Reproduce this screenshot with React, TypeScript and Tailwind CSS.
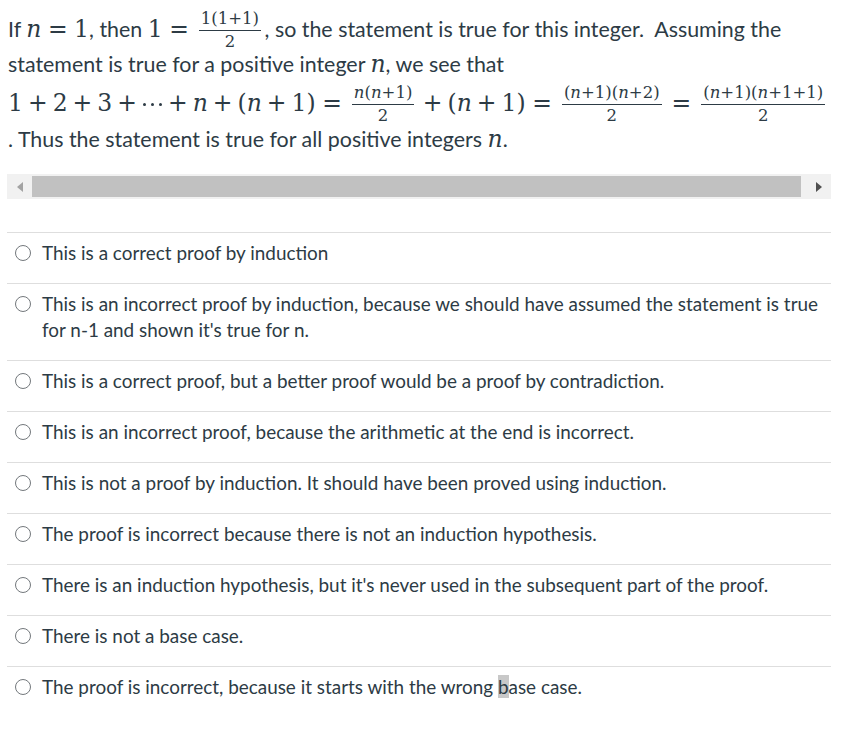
import React from 'react';

const mathFont = "font-['DejaVu_Serif',serif]";

function Bin({ children }: { children: React.ReactNode }) {
  return <span className="mx-[5px]">{children}</span>;
}

function Rel({ children }: { children: React.ReactNode }) {
  return <span className="mx-[6.5px]">{children}</span>;
}

function N() {
  return <i>n</i>;
}

function Frac({ num, den }: { num: React.ReactNode; den: React.ReactNode }) {
  return (
    <span className="inline-flex flex-col items-center align-middle mx-[3.5px] text-[16.5px] leading-[18px]">
      <span className="px-[2px] pb-[2px]">{num}</span>
      <span className="w-full border-t border-[#2d3b45] text-center pt-[2px]">{den}</span>
    </span>
  );
}

function M({ children }: { children: React.ReactNode }) {
  return <span className={`${mathFont} text-[23.5px]`}>{children}</span>;
}

// centred dots, drawn as three small circles on the math axis
function CDots() {
  return (
    <span className="inline-flex items-center gap-[5px] align-middle mx-[1px] h-[10px]">
      <span className="w-[3px] h-[3px] rounded-full bg-[#2d3b45]" />
      <span className="w-[3px] h-[3px] rounded-full bg-[#2d3b45]" />
      <span className="w-[3px] h-[3px] rounded-full bg-[#2d3b45]" />
    </span>
  );
}

const options: React.ReactNode[] = [
  'This is a correct proof by induction',
  <>
    <span className="block">This is an incorrect proof by induction, because we should have assumed the statement is true</span>
    <span className="block">for n-1 and shown it's true for n.</span>
  </>,
  'This is a correct proof, but a better proof would be a proof by contradiction.',
  'This is an incorrect proof, because the arithmetic at the end is incorrect.',
  'This is not a proof by induction. It should have been proved using induction.',
  'The proof is incorrect because there is not an induction hypothesis.',
  "There is an induction hypothesis, but it's never used in the subsequent part of the proof.",
  'There is not a base case.',
  <>
    The proof is incorrect, because it starts with the wrong <span className="bg-[#c8c8c8]">b</span>ase case.
  </>,
];

export default function App() {
  return (
    <div className="w-[850px] h-[730px] bg-white text-[#2d3b45] font-['Lato','Noto_Sans',sans-serif] overflow-hidden">
      <div className="pl-[7px] pr-[19px]">
        {/* question text */}
        <div className="overflow-hidden whitespace-nowrap text-[21.4px] pt-[12px] pl-px">
          <div className="h-[36px] flex items-center">
            <span>
              If <M><N /><Rel>=</Rel>1</M>, then <M>1<Rel>=</Rel></M>
              <M><Frac num="1(1+1)" den="2" /></M>, so the statement is true for this integer.&nbsp; Assuming the
            </span>
          </div>
          <div className="h-[33px] flex items-center">
            <span>
              statement is true for a positive integer <M><N /></M>, we see that
            </span>
          </div>
          <div className="h-[47px] flex items-center">
            <M>
              1<Bin>+</Bin>2<Bin>+</Bin>3<Bin>+</Bin><CDots /><Bin>+</Bin><N /><Bin>+</Bin>(<N /><Bin>+</Bin>1)<Rel>=</Rel>
              <Frac num={<><N />(<N />+1)</>} den="2" />
              <Bin>+</Bin>(<N /><Bin>+</Bin>1)<Rel>=</Rel>
              <Frac num={<>(<N />+1)(<N />+2)</>} den="2" />
              <Rel>=</Rel>
              <Frac num={<>(<N />+1)(<N />+1+1)</>} den="2" />
            </M>
          </div>
          <div className="h-[24px] flex items-center">
            <span>
              . Thus the statement is true for all positive integers <M><N /></M>.
            </span>
          </div>
        </div>

        {/* horizontal scrollbar */}
        <div className="mt-[22px] h-[25px] bg-[#f1f1f1] flex items-center">
          <div className="w-[25px] h-full flex items-center justify-center">
            <svg width="6" height="10" viewBox="0 0 6 10">
              <path d="M6 0 L0 5 L6 10 Z" fill="#a3a3a3" />
            </svg>
          </div>
          <div className="flex-1 h-[21px] bg-[#c1c1c1]" />
          <div className="w-[30px] h-full flex items-center justify-center pl-[5px]">
            <svg width="6" height="10" viewBox="0 0 6 10">
              <path d="M0 0 L6 5 L0 10 Z" fill="#505050" />
            </svg>
          </div>
        </div>

        {/* answers */}
        <div className="mt-[33px] text-[18.9px] leading-[26px]">
          {options.map((opt, i) => (
            <div key={i} className="border-t border-[#dedede] pt-[7px] pb-[17px] flex items-start">
              <div className="w-[35px] pl-[8px] pt-[5px] shrink-0">
                <div className="w-4 h-4 rounded-full border-[1.5px] border-[#73787c] bg-white" />
              </div>
              <div>{opt}</div>
            </div>
          ))}
        </div>
      </div>
    </div>
  );
}
